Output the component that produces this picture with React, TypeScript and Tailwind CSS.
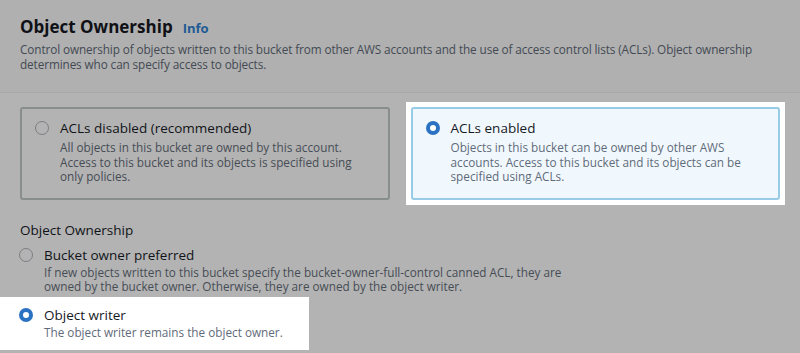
import React from "react";

const font = { fontFamily: '"Open Sans", "Noto Sans", sans-serif' };

function Radio({ checked, dim }: { checked?: boolean; dim?: boolean }) {
  if (checked) {
    return (
      <span className="mt-[2px] flex h-[14px] w-[14px] shrink-0 items-center justify-center rounded-full bg-[#2b72c2]">
        <span className="h-[6px] w-[6px] rounded-full bg-white" />
      </span>
    );
  }
  return (
    <span
      className={
        "mt-[2px] block h-[14px] w-[14px] shrink-0 rounded-full border-[1.5px] " +
        (dim ? "border-[#7b7e82] bg-[#b3b3b3]" : "border-[#7d8998] bg-white")
      }
    />
  );
}

export default function App() {
  return (
    <div className="h-[353px] w-[800px] overflow-hidden bg-[#b3b3b3]" style={font}>
      {/* Header */}
      <div className="h-[93px] border-b border-[#a9a9a9] bg-[#b0b0b0] px-[20px] pt-[15px]">
        <div className="flex items-baseline gap-[10px]">
          <h2 className="text-[17px] font-bold leading-[24px] text-[#0f1116]">Object Ownership</h2>
          <span className="text-[13px] font-bold text-[#1f5a94]">Info</span>
        </div>
        <p className="mt-[3px] text-[11.75px] leading-[15px] tracking-[-0.1px] text-[#434a53]">
          Control ownership of objects written to this bucket from other AWS accounts and the use of access control lists (ACLs). Object ownership determines who can specify access to objects.
        </p>
      </div>

      {/* Tiles */}
      <div className="grid grid-cols-2 gap-[21px] px-[20px] pt-[14px]">
        <div className="flex gap-[11px] rounded-[3px] border-2 border-[#878e8b] px-[13px] pb-[14px] pt-[10px]">
          <Radio dim />
          <div>
            <div className="text-[13.5px] leading-[18px] text-[#111318]">ACLs disabled (recommended)</div>
            <div className="mt-[3px] text-[11.75px] leading-[14.5px] text-[#474d55]">
              All objects in this bucket are owned by this account. Access to this bucket and its objects is specified using only policies.
            </div>
          </div>
        </div>
        <div className="-m-[5px] bg-white p-[5px]">
          <div className="flex h-full gap-[11px] rounded-[3px] border-2 border-[#98cbe5] bg-[#f1f8fd] px-[13px] pb-[14px] pt-[10px]">
            <Radio checked />
            <div>
              <div className="text-[13.5px] leading-[18px] text-[#16191f]">ACLs enabled</div>
              <div className="mt-[3px] pr-[20px] text-[11.75px] leading-[14.5px] text-[#5f6b7a]">
                Objects in this bucket can be owned by other AWS accounts. Access to this bucket and its objects can be specified using ACLs.
              </div>
            </div>
          </div>
        </div>
      </div>

      {/* Object Ownership options */}
      <div className="pt-[20px]">
        <div className="px-[20px] text-[13.5px] leading-[20px] text-[#111318]">Object Ownership</div>
        <div className="mt-[6px] flex gap-[11px] px-[19px]">
          <Radio dim />
          <div>
            <div className="text-[13.5px] leading-[18px] text-[#111318]">Bucket owner preferred</div>
            <div className="mt-[1px] w-[530px] text-[11.75px] leading-[14.5px] text-[#474d55]">
              If new objects written to this bucket specify the bucket-owner-full-control canned ACL, they are owned by the bucket owner. Otherwise, they are owned by the object writer.
            </div>
          </div>
        </div>
        <div className="mt-[3px] flex w-[309px] gap-[11px] bg-white px-[19px] pb-[11px] pt-[9px]">
          <Radio checked />
          <div>
            <div className="text-[13.5px] leading-[18px] text-[#16191f]">Object writer</div>
            <div className="mt-[1px] whitespace-nowrap text-[11.75px] leading-[14.5px] text-[#5f6b7a]">
              The object writer remains the object owner.
            </div>
          </div>
        </div>
      </div>
    </div>
  );
}
